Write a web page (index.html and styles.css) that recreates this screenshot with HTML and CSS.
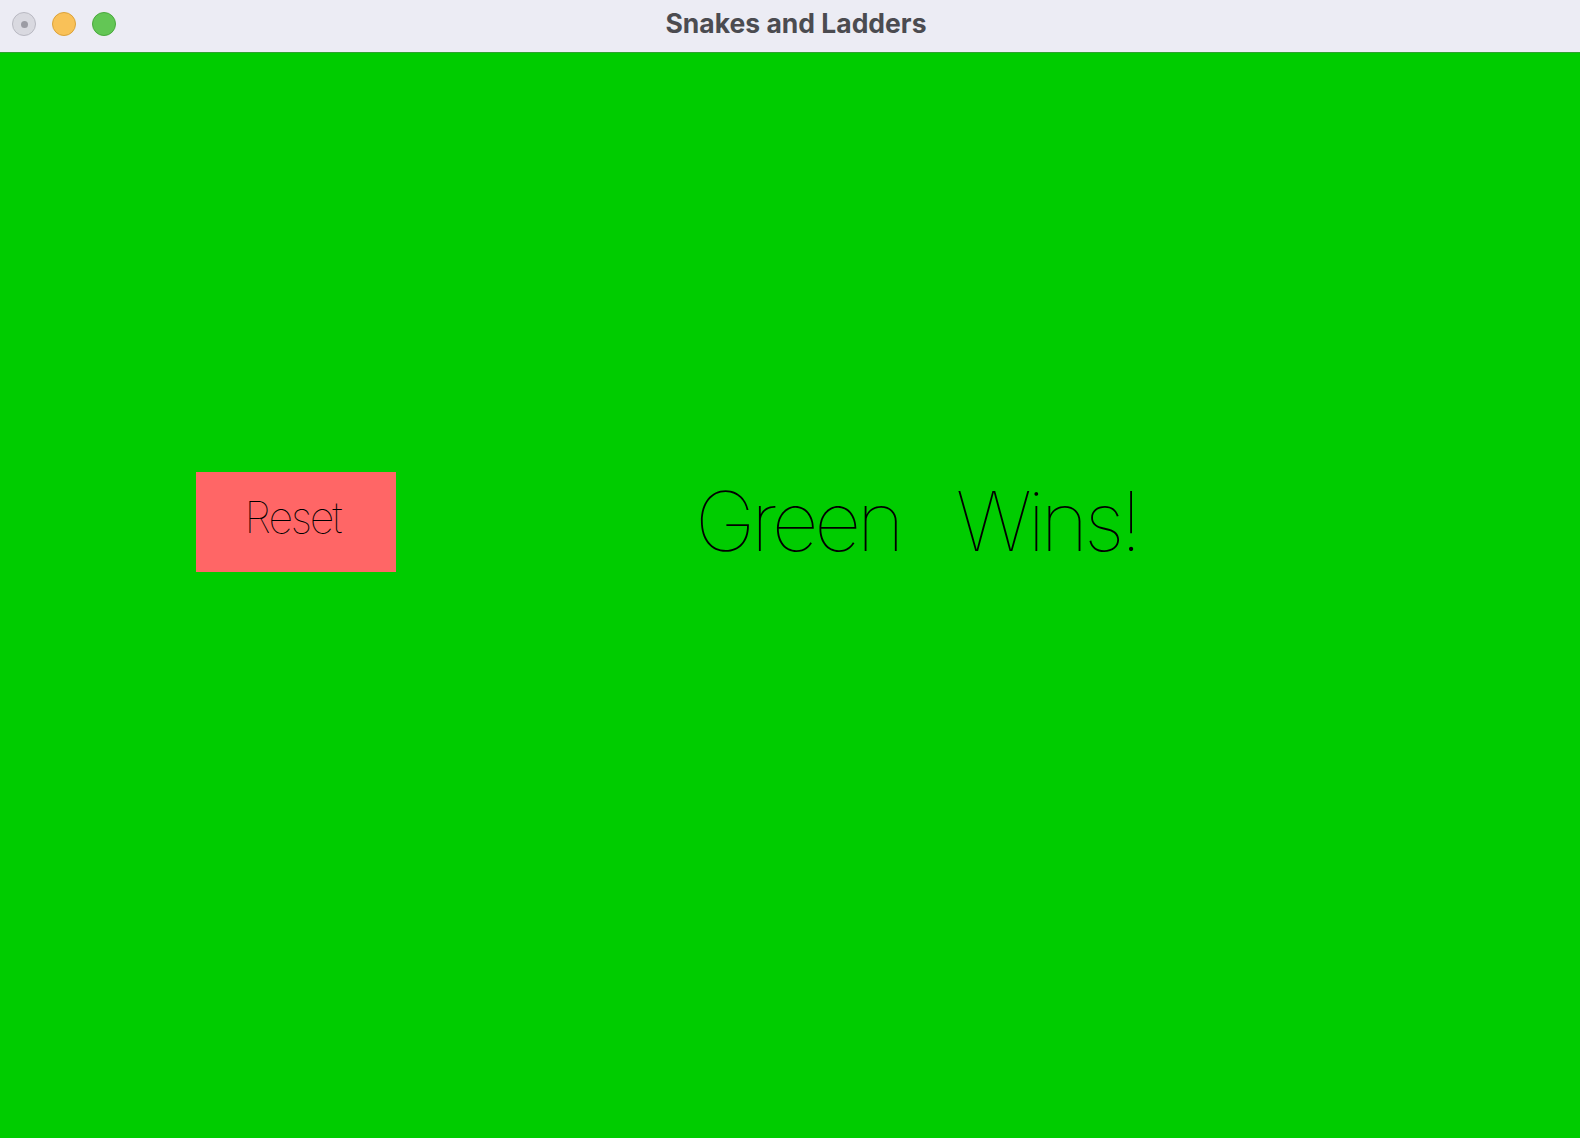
FILE: index.html
```html
<!DOCTYPE html>
<html>
<head>
<meta charset="utf-8">
<link rel="stylesheet" href="styles.css">
<title>Snakes and Ladders</title>
</head>
<body>
<div class="window">
  <header class="titlebar">
    <div class="lights">
      <span class="light close"><span class="dot"></span></span>
      <span class="light min"></span>
      <span class="light max"></span>
    </div>
    <div class="title">Snakes and Ladders</div>
  </header>
  <main class="board">
    <div class="reset">Reset</div>
    <div class="winner">Green&nbsp;&nbsp;&nbsp;Wins!</div>
  </main>
</div>
</body>
</html>
```
FILE: styles.css
```css
html, body {
  margin: 0;
  padding: 0;
  width: 1580px;
  height: 1138px;
  overflow: hidden;
}
.window {
  display: flex;
  flex-direction: column;
  height: 1138px;
}
.titlebar {
  box-sizing: border-box;
  height: 53px;
  flex: 0 0 53px;
  background: #ececf4;
  border-bottom: 1px solid #2fa22f;
  position: relative;
  display: flex;
  align-items: center;
  justify-content: center;
}
.lights {
  position: absolute;
  left: 12px;
  top: 12px;
  display: flex;
  gap: 16px;
}
.light {
  width: 22px;
  height: 22px;
  border-radius: 50%;
  display: flex;
  align-items: center;
  justify-content: center;
}
.close {
  background: #d9d9e0;
  border: 1px solid #b9b9c2;
}
.close .dot {
  width: 7px;
  height: 7px;
  border-radius: 50%;
  background: #9c9ca4;
}
.min {
  background: #f9c158;
  border: 1px solid #dba23a;
}
.max {
  background: #63c655;
  border: 1px solid #4aa93d;
}
.title {
  font-family: Inter, "Liberation Sans", sans-serif;
  font-weight: 700;
  font-size: 26.5px;
  color: #4b4b50;
  margin-left: 12px;
  margin-top: -6px;
}
.board {
  flex: 1;
  background: #00cc00;
  display: flex;
  align-items: flex-start;
  padding: 419px 0 0 196px;
}
.reset {
  width: 200px;
  height: 100px;
  background: #ff6666;
  color: #000;
  font-family: Inter, sans-serif;
  font-weight: 100;
  font-size: 43px;
  letter-spacing: -2.2px;
  display: flex;
  align-items: center;
  justify-content: center;
  box-sizing: border-box;
  padding: 0 7px 10px 0;
}
.winner {
  margin-left: 299px;
  margin-top: 0;
  font-family: Inter, sans-serif;
  font-weight: 100;
  font-size: 82px;
  letter-spacing: -4.5px;
  color: #000;
  line-height: 100px;
  white-space: nowrap;
}
```
